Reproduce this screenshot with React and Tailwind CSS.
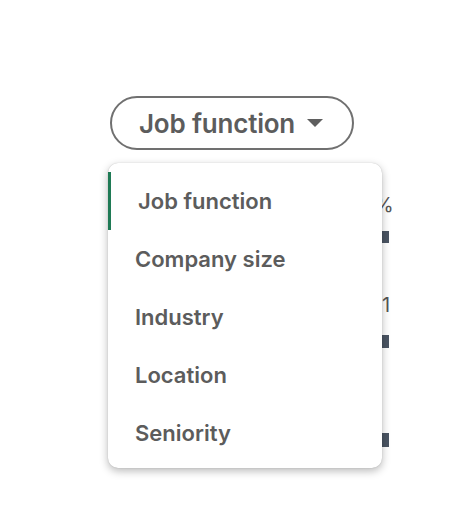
import { useState } from "react";

const options = ["Job function", "Company size", "Industry", "Location", "Seniority"];

function Caret() {
  return (
    <svg width="16" height="9" viewBox="0 0 16 9" className="ml-[12px]">
      <path d="M0 0 H16 L8 8 Z" fill="#5f5f5f" />
    </svg>
  );
}

export default function App() {
  const [selected] = useState("Job function");

  return (
    <div
      className="relative w-[474px] h-[526px] bg-white overflow-hidden"
      style={{ fontFamily: "Inter, 'Liberation Sans', sans-serif" }}
    >
      <div className="pt-[96px] pl-[110px]">
        <button className="flex items-center h-[54px] w-[244px] pl-[27px] rounded-full border-2 border-[#707070] text-[26px] font-semibold text-[#5c5c5c] tracking-[-0.2px]">
          Job function
          <Caret />
        </button>
      </div>

      {/* content behind the menu */}
      <div className="ml-[373px] flex flex-col items-start text-[#555] leading-none">
        <span className="mt-[45px] text-[20px] pl-[1px]">%</span>
        <span className="mt-[16px] ml-[8px] w-[8px] h-[12px] bg-[#4b5563]" />
        <span className="mt-[52px] ml-[9px] text-[20px]">1</span>
        <span className="mt-[20px] ml-[8px] w-[8px] h-[13px] bg-[#4b5563]" />
        <span className="mt-[85px] ml-[8px] w-[8px] h-[14px] bg-[#4b5563]" />
      </div>

      <div className="absolute left-[108px] top-[163px] w-[274px] h-[305px] bg-white rounded-[10px] shadow-[0_3px_8px_rgba(0,0,0,0.28),0_0_1px_rgba(0,0,0,0.25)] pt-[9px] flex flex-col">
        {options.map((o) => (
          <div
            key={o}
            className={
              "h-[58px] flex items-center text-[22px] font-semibold text-[#5c5c5c] " +
              (o === selected ? "border-l-[3px] border-[#1f7a55] pl-[27px]" : "pl-[27px]")
            }
          >
            {o}
          </div>
        ))}
      </div>
    </div>
  );
}
